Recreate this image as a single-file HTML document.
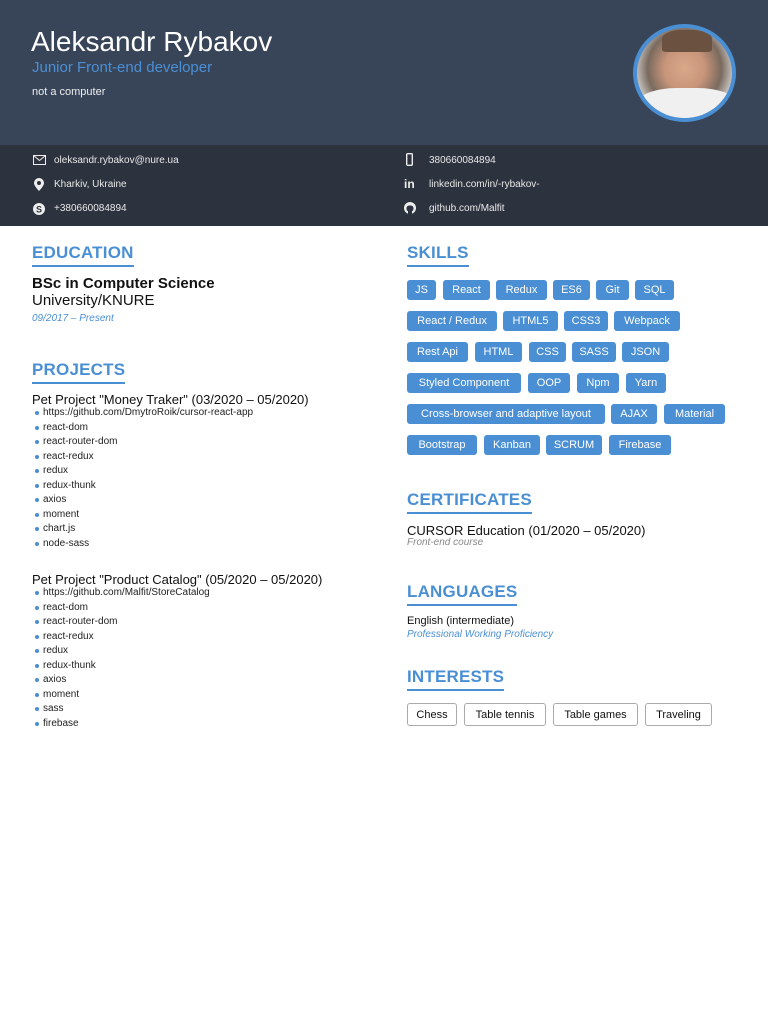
<!DOCTYPE html>
<html><head><meta charset="utf-8"><style>
*{margin:0;padding:0;box-sizing:border-box}
body{width:768px;height:1024px;background:#fff;font-family:"Liberation Sans",sans-serif;position:relative;overflow:hidden;color:#111}
.a{position:absolute;white-space:nowrap}
.hdr{position:absolute;left:0;top:0;width:768px;height:145px;background:#384559}
.bar{position:absolute;left:0;top:145px;width:768px;height:81px;background:#2c333f}
.ct{font-size:10px;color:#e8e8e8}
.h{font-size:17px;font-weight:bold;color:#4a8fd4;border-bottom:2px solid #4a8fd4;padding-bottom:2px;letter-spacing:0.2px}
.t{position:absolute;height:20px;background:#4a8fd4;color:#fff;font-size:11px;line-height:20px;text-align:center;border-radius:3px}
.i{position:absolute;top:703px;height:23px;border:1px solid #aaa;color:#111;font-size:11px;line-height:22px;text-align:center;border-radius:3px}
.li{font-size:10px;color:#222}
.li:before{content:"";position:absolute;left:-8px;top:4px;width:4px;height:4px;border-radius:50%;background:#4a8fd4}
</style></head><body>
<div class="hdr"></div>
<div class="a" style="left:31px;top:26px;font-size:28px;color:#fff">Aleksandr Rybakov</div>
<div class="a" style="left:32px;top:59px;font-size:15px;color:#4a8fd4">Junior Front-end developer</div>
<div class="a" style="left:32px;top:86px;font-size:11px;color:#eee">not a computer</div>
<div class="a" style="left:633px;top:24px;width:103px;height:98px;border-radius:50%;border:4px solid #4a8fd4;background:radial-gradient(ellipse at 50% 45%,#d9a88a 0,#c8957a 30%,#7a6a5e 55%,#e8e8e8 80%);overflow:hidden">
<div style="position:absolute;left:25px;top:2px;width:50px;height:22px;background:#6b5140;border-radius:40% 40% 10% 10%"></div>
<div style="position:absolute;left:0;top:60px;width:100px;height:40px;background:#f0f0f0;border-radius:40% 40% 0 0"></div>
</div>
<div class="bar"></div>
<svg class="a" style="left:33px;top:155px" width="13" height="10" viewBox="0 0 13 10"><rect x="0.5" y="0.5" width="12" height="9" fill="none" stroke="#eee"/><path d="M0.5 0.5L6.5 5.5L12.5 0.5" fill="none" stroke="#eee"/></svg>
<div class="a ct" style="left:54px;top:155px">oleksandr.rybakov@nure.ua</div>
<svg class="a" style="left:34px;top:178px" width="10" height="13" viewBox="0 0 10 13"><path d="M5 0A5 5 0 0 0 0 5C0 8 5 13 5 13S10 8 10 5A5 5 0 0 0 5 0Z" fill="#eee"/><circle cx="5" cy="5" r="2" fill="#2c333f"/></svg>
<div class="a ct" style="left:54px;top:179px">Kharkiv, Ukraine</div>
<svg class="a" style="left:33px;top:203px" width="12" height="12" viewBox="0 0 12 12"><circle cx="6" cy="6" r="6" fill="#eee"/><text x="6" y="9.5" font-size="9" font-weight="bold" text-anchor="middle" fill="#2c333f" font-family="Liberation Sans">S</text></svg>
<div class="a ct" style="left:54px;top:203px">+380660084894</div>
<svg class="a" style="left:406px;top:153px" width="7" height="13" viewBox="0 0 7 13"><rect x="0.7" y="0.7" width="5.6" height="11.6" rx="1" fill="none" stroke="#eee" stroke-width="1.4"/></svg>
<div class="a ct" style="left:429px;top:155px">380660084894</div>
<div class="a" style="left:404px;top:177px;font-size:12px;font-weight:bold;color:#eee">in</div>
<div class="a ct" style="left:429px;top:179px">linkedin.com/in/-rybakov-</div>
<svg class="a" style="left:404px;top:202px" width="12" height="12" viewBox="0 0 12 12"><circle cx="6" cy="6" r="6" fill="#eee"/><path d="M4 12V9C3 9 2.5 8 2.5 6.5C2.5 4 4 3.5 6 3.5S9.5 4 9.5 6.5C9.5 8 9 9 8 9V12Z" fill="#2c333f"/></svg>
<div class="a ct" style="left:429px;top:203px">github.com/Malfit</div>

<div class="a h" style="left:32px;top:243px">EDUCATION</div>
<div class="a" style="left:32px;top:275px;font-size:15px;font-weight:bold">BSc in Computer Science</div>
<div class="a" style="left:32px;top:292px;font-size:15px">University/KNURE</div>
<div class="a" style="left:32px;top:313px;font-size:10px;font-style:italic;color:#4a8fd4">09/2017 – Present</div>

<div class="a h" style="left:32px;top:360px">PROJECTS</div>
<div class="a" style="left:32px;top:392px;font-size:13px">Pet Project "Money Traker" (03/2020 – 05/2020)</div>
<div class="a li" style="left:43px;top:407px">https://github.com/DmytroRoik/cursor-react-app</div>
<div class="a li" style="left:43px;top:421.5px">react-dom</div>
<div class="a li" style="left:43px;top:436px">react-router-dom</div>
<div class="a li" style="left:43px;top:450.5px">react-redux</div>
<div class="a li" style="left:43px;top:465px">redux</div>
<div class="a li" style="left:43px;top:479.5px">redux-thunk</div>
<div class="a li" style="left:43px;top:494px">axios</div>
<div class="a li" style="left:43px;top:508.5px">moment</div>
<div class="a li" style="left:43px;top:523px">chart.js</div>
<div class="a li" style="left:43px;top:537.5px">node-sass</div>

<div class="a" style="left:32px;top:572px;font-size:13px">Pet Project "Product Catalog" (05/2020 – 05/2020)</div>
<div class="a li" style="left:43px;top:587px">https://github.com/Malfit/StoreCatalog</div>
<div class="a li" style="left:43px;top:601.5px">react-dom</div>
<div class="a li" style="left:43px;top:616px">react-router-dom</div>
<div class="a li" style="left:43px;top:630.5px">react-redux</div>
<div class="a li" style="left:43px;top:645px">redux</div>
<div class="a li" style="left:43px;top:659.5px">redux-thunk</div>
<div class="a li" style="left:43px;top:674px">axios</div>
<div class="a li" style="left:43px;top:688.5px">moment</div>
<div class="a li" style="left:43px;top:703px">sass</div>
<div class="a li" style="left:43px;top:717.5px">firebase</div>

<div class="a h" style="left:407px;top:243px">SKILLS</div>
<div class="t" style="left:407px;top:280px;width:29px">JS</div>
<div class="t" style="left:443px;top:280px;width:47px">React</div>
<div class="t" style="left:496px;top:280px;width:51px">Redux</div>
<div class="t" style="left:553px;top:280px;width:37px">ES6</div>
<div class="t" style="left:596px;top:280px;width:33px">Git</div>
<div class="t" style="left:635px;top:280px;width:39px">SQL</div>
<div class="t" style="left:407px;top:311px;width:90px">React / Redux</div>
<div class="t" style="left:503px;top:311px;width:55px">HTML5</div>
<div class="t" style="left:564px;top:311px;width:44px">CSS3</div>
<div class="t" style="left:614px;top:311px;width:66px">Webpack</div>
<div class="t" style="left:407px;top:342px;width:61px">Rest Api</div>
<div class="t" style="left:475px;top:342px;width:47px">HTML</div>
<div class="t" style="left:529px;top:342px;width:37px">CSS</div>
<div class="t" style="left:572px;top:342px;width:44px">SASS</div>
<div class="t" style="left:622px;top:342px;width:47px">JSON</div>
<div class="t" style="left:407px;top:373px;width:114px">Styled Component</div>
<div class="t" style="left:528px;top:373px;width:42px">OOP</div>
<div class="t" style="left:577px;top:373px;width:42px">Npm</div>
<div class="t" style="left:626px;top:373px;width:40px">Yarn</div>
<div class="t" style="left:407px;top:404px;width:198px">Cross-browser and adaptive layout</div>
<div class="t" style="left:611px;top:404px;width:46px">AJAX</div>
<div class="t" style="left:664px;top:404px;width:61px">Material</div>
<div class="t" style="left:407px;top:435px;width:70px">Bootstrap</div>
<div class="t" style="left:484px;top:435px;width:56px">Kanban</div>
<div class="t" style="left:546px;top:435px;width:56px">SCRUM</div>
<div class="t" style="left:609px;top:435px;width:62px">Firebase</div>

<div class="a h" style="left:407px;top:490px">CERTIFICATES</div>
<div class="a" style="left:407px;top:523px;font-size:13px">CURSOR Education (01/2020 – 05/2020)</div>
<div class="a" style="left:407px;top:537px;font-size:10px;font-style:italic;color:#888">Front-end course</div>

<div class="a h" style="left:407px;top:582px">LANGUAGES</div>
<div class="a" style="left:407px;top:615px;font-size:11px">English (intermediate)</div>
<div class="a" style="left:407px;top:629px;font-size:10px;font-style:italic;color:#4a8fd4">Professional Working Proficiency</div>

<div class="a h" style="left:407px;top:667px">INTERESTS</div>
<div class="i" style="left:407px;width:50px">Chess</div>
<div class="i" style="left:464px;width:82px">Table tennis</div>
<div class="i" style="left:553px;width:85px">Table games</div>
<div class="i" style="left:645px;width:67px">Traveling</div>
</body></html>
